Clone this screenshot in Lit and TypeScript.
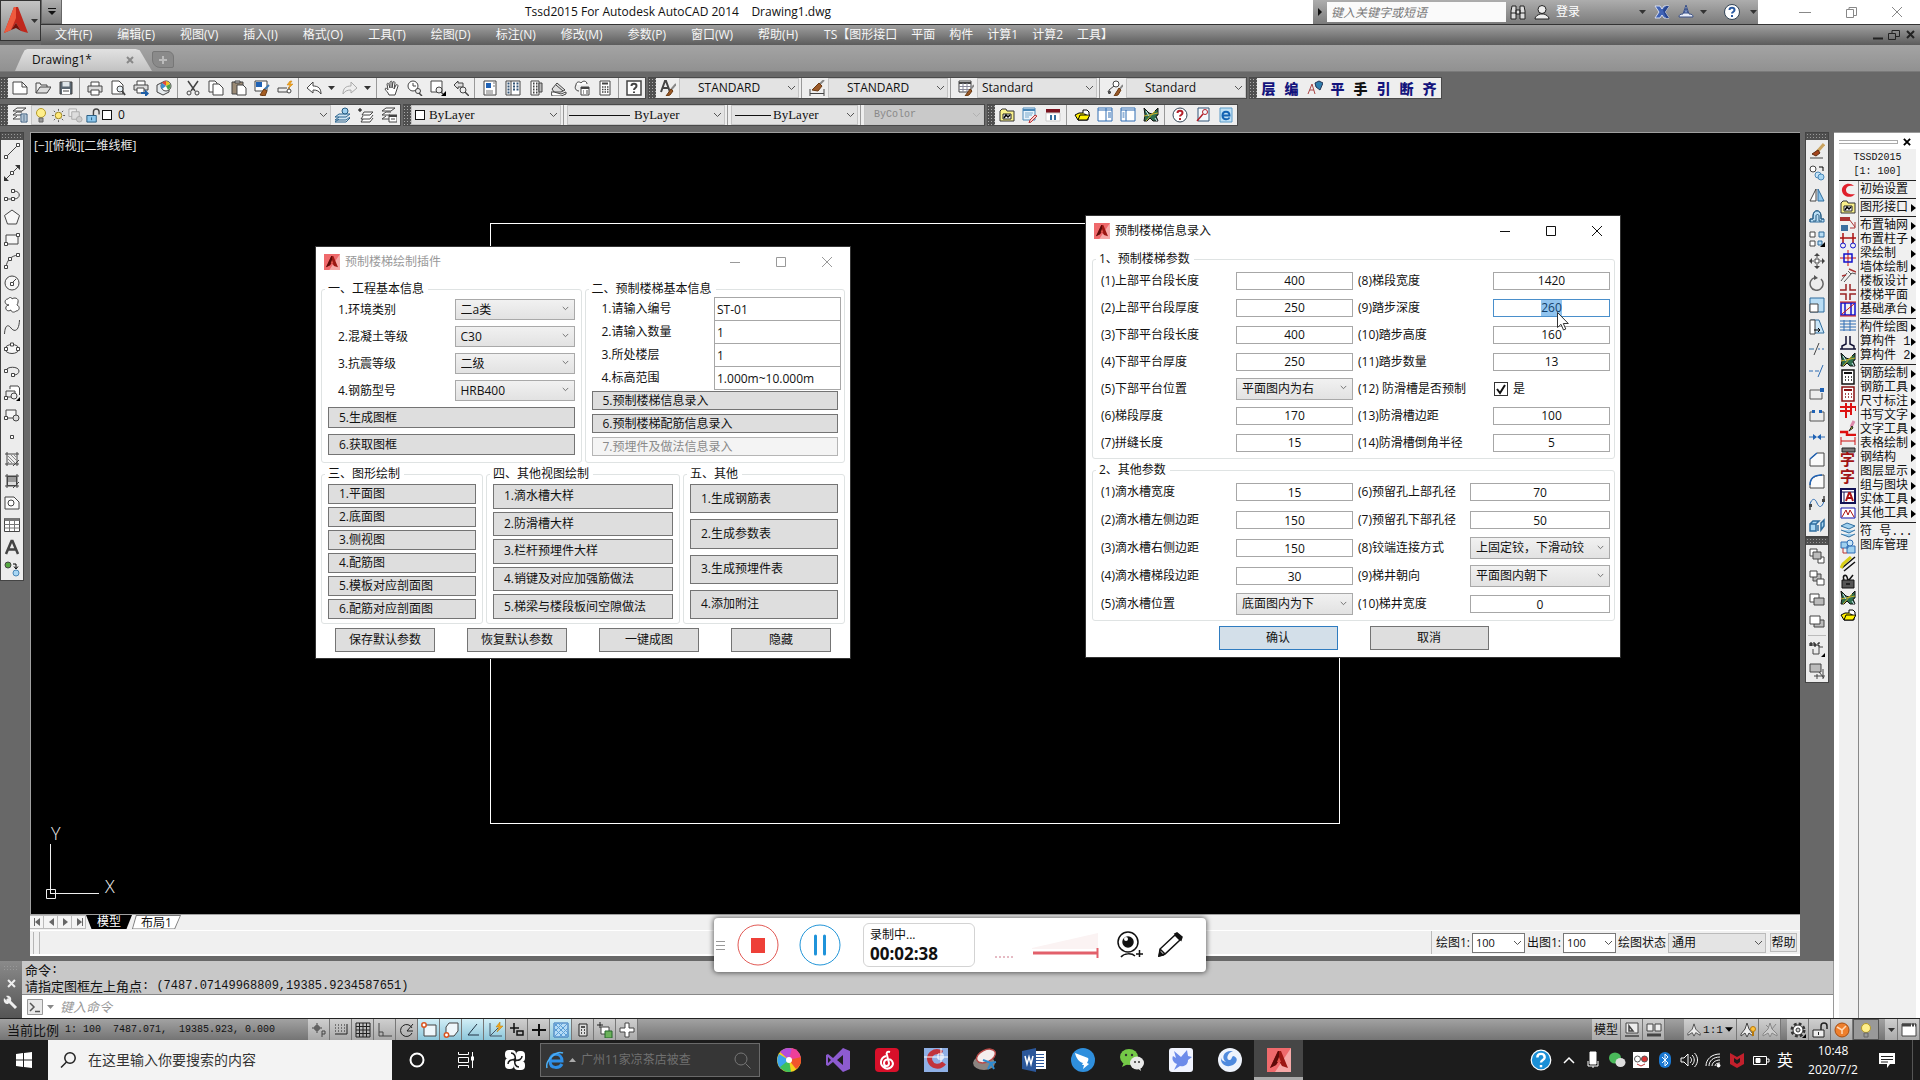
import { LitElement, html, svg, css, nothing, TemplateResult, SVGTemplateResult } from "lit";
import { customElement } from "lit/decorators.js";

/* ------------------------------------------------------------------ icons */

const ICONS: Record<string, SVGTemplateResult> = {
  // file toolbar
  new: svg`<path d="M1 2h9l5 5v7H1z" fill="#fff"/><path d="M10 2v5h5"/>`,
  open: svg`<path d="M1 13V3h4l1 2h6v2"/><path d="M1 13l4-6h11l-4 6z" fill="#ddd"/>`,
  save: svg`<path d="M2 2h12v12H2z" fill="#5a6772"/><path d="M4.500 2h7v4.500h-7z" fill="#dfe6ea" stroke="none"/><path d="M4 9h8v5H4z" fill="#fff" stroke="none"/><path d="M5 11h6"/>`,
  print: svg`<path d="M4 6V2h8v4" fill="#fff"/><path d="M1 6h14v6H1z" fill="#ddd"/><path d="M4 10h8v5H4z" fill="#fff"/>`,
  preview: svg`<path d="M2 1h7l4 4v9H2z" fill="#fff"/><circle cx="10" cy="9" r="3" fill="#e6f0f6"/><path d="M12 11l3 4" stroke-width="2"/>`,
  publish: svg`<path d="M4 5V1h8v4" fill="#fff"/><path d="M1 5h14v5H1z" fill="#ddd"/><path d="M4 8h7v5H4z" fill="#fff"/><path d="M8 12h4v-2.500l4 4-4 4V14H8z" fill="#1d5fa8" stroke="none"/>`,
  print3d: svg`<path d="M1 5l6-3 6 3v7l-6 3-6-3z" fill="#e4e9ec"/><circle cx="10" cy="6" r="5" fill="#fff"/><path d="M10 6L6 3a5 5 0 0 1 4-2z" fill="#e14b3c" stroke="none"/><path d="M10 6V1a5 5 0 0 1 4 3z" fill="#f3c11b" stroke="none"/><path d="M10 6l4-2a5 5 0 0 1-2 6z" fill="#4ba24a" stroke="none"/><path d="M10 6L6 9a5 5 0 0 1 0-6z" fill="#3d8ed0" stroke="none"/>`,
  cut: svg`<path d="M3 1l7 10M13 1L6 11" stroke-width="1.500"/><circle cx="4" cy="13" r="2"/><circle cx="12" cy="13" r="2"/>`,
  copy: svg`<path d="M1 1h6l2 2v9H1z" fill="#fff"/><path d="M5 4h6l4 4v7H5z" fill="#fff"/>`,
  paste: svg`<path d="M1 2h11v12H1z" fill="#9a8a75"/><path d="M4 1h5v2H4z" fill="#ccc"/><path d="M6 5h6l3 3v7H6z" fill="#fff"/>`,
  match: svg`<path d="M1 1h12v10H1z" fill="#fff"/><path d="M2 2h6v5H2z" fill="#1f62b5" stroke="none"/><path d="M15 5l-5 5" stroke="#3c7ab5" stroke-width="2"/><path d="M10 9l3 2-2 5-5-1z" fill="#a55d23" stroke="#6b3a12"/>`,
  block: svg`<path d="M1 12V8h9M1 12h11V7"/><circle cx="12" cy="11" r="2" fill="#fff"/><path d="M13 1l-3 4h3l-2 4 5-5h-3l2-3z" fill="#f2a81d" stroke="#c57b12" stroke-width=".5"/>`,
  undo: svg`<path d="M7 2L1 8l6 5v-3c4 0 6 1 8 4 0-6-3-8-8-8z" fill="#fff"/>`,
  redo: svg`<path d="M9 2l6 6-6 5v-3c-4 0-6 1-8 4 0-6 3-8 8-8z" stroke="#aaa" fill="#eee"/>`,
  pan: svg`<path d="M5 15c-1-3-3-4-4-6 1-2 2 0 3 1L3 4c1-2 2 0 2 1l1 3V2c1-1 2-1 2 0v6l1-6c1-1 2 0 2 1l-1 6 2-4c1-1 2 0 2 1l-3 9z" fill="#fff"/>`,
  zoomrt: svg`<circle cx="6" cy="6" r="5" fill="#fff"/><path d="M6 3v3h3"/><circle cx="11" cy="11" r="2.500" fill="#eee"/><path d="M12 13l3 3" stroke-width="1.500"/>`,
  zoomwin: svg`<path d="M1 1h11v11H1z" fill="#fff"/><circle cx="9" cy="10" r="3" fill="#eee"/><path d="M11 12l2 2" stroke-width="1.500"/><path d="M16 16h-5l5-5z" fill="#000" stroke="none"/>`,
  zoomprev: svg`<path d="M5 1L1 5l4 4V7h5V3H5z" fill="#ddd"/><circle cx="10" cy="10" r="3" fill="#eee"/><path d="M12 12l4 4" stroke-width="1.500"/>`,
  props: svg`<path d="M2 1h12v14H2z" fill="#fff"/><path d="M4 3h5v5H4z" fill="#1f62b5" stroke="none"/><path d="M4 11h7M4 13h7M11 3h2M11 6h2" stroke="#777"/>`,
  center: svg`<path d="M1 1h14v14H1z" fill="#fff"/><path d="M6 1v14"/><path d="M2.500 3.500h2M2.500 6.500h2M2.500 9.500h2M2.500 12.500h2M8 3.500h2M8 6.500h2M8 9.500h2M11.500 3.500h2M11.500 6.500h2M11.500 9.500h2" stroke="#357" stroke-width="2"/>`,
  palette: svg`<path d="M3 1h8v14H3z" fill="#fff"/><path d="M11 3h3v9h-3z" fill="#bbb"/><path d="M5 3.500h1.500M8 3.500h1.500M5 6.500h1.500M8 6.500h1.500M5 9.500h1.500M8 9.500h1.500M5 12.500h1.500M8 12.500h1.500" stroke-width="2"/>`,
  sheets: svg`<path d="M1 9l5-6 8 7-4 2H3z" fill="#ddd"/><path d="M0 12h3l7 2 5-2v2l-5 2H1z" fill="#fff"/><path d="M5 5l7 6"/>`,
  markup: svg`<path d="M2 5c0-3 3-4 5-2 2-3 6-2 6 1" fill="#fff"/><path d="M2 5c-2 3 0 6 3 6" /><path d="M7 7h8v8H7z" fill="#fff"/><path d="M7 8h8" stroke-width="2"/><path d="M9 11h1M12 11h2M9 13h1M12 13h2"/>`,
  calc: svg`<path d="M3 1h10v14H3z" fill="#fff"/><path d="M5 3.500h6" stroke-width="2"/><path d="M5 7h1.500M7.500 7H9M10 7h1.500M5 9.500h1.500M7.500 9.500H9M10 9.500h1.500M5 12h1.500M7.500 12H9M10 12h1.500" stroke-width="1.500"/>`,
  help: svg`<path d="M1 1h14v14H1z" fill="#fff" stroke-width="1.500"/><path d="M5.500 6c0-3 5-3 5 0 0 2-2.500 2-2.500 4M8 11.500v1.500" stroke-width="2"/>`,
  // style toolbar
  textstyle: svg`<path d="M1 12L5 1h1l4 11M3 8h5" stroke-width="2"/><path d="M16 4l-6 7" stroke="#888" stroke-width="2"/><path d="M11 9l2 2-3 4-4 1z" fill="#9c5a28" stroke="#6b3a12"/>`,
  dimstyle: svg`<path d="M1 9v7M15 9v7M1 13.500h14"/><path d="M15 0l-5 5" stroke="#888" stroke-width="2"/><path d="M10 3l3 3-4 5-6-1z" fill="#9c5a28" stroke="#6b3a12"/>`,
  tablestyle: svg`<path d="M1 1h12v11H1z" fill="#fff"/><path d="M1 3h12" stroke-width="2"/><path d="M1 6.500h12M1 9.500h12M5 3v9M9 3v9" stroke="#889"/><path d="M16 5l-4 5" stroke="#888" stroke-width="2"/><path d="M12 9l2 2-3 4-4 1z" fill="#9c5a28" stroke="#6b3a12"/>`,
  mleader: svg`<circle cx="9" cy="4" r="3" fill="#fff"/><path d="M7 6l-5 4 1 4M2 14l-1-3 3 1z"/><path d="M16 5l-4 5" stroke="#888" stroke-width="2"/><path d="M12 8l2 2-3 5-4 1z" fill="#9c5a28" stroke="#6b3a12"/>`,
  abrush: svg`<path d="M1 14L5 4l3 10M3 10h4" stroke="#a44"/><path d="M8 3l4-2 4 2-3 7-4-3z" fill="#2f7dad" stroke="#235"/>`,
  // layers
  layerprop: svg`<path d="M5 1h9l-4 3H1zM5 5h5M5 5L1 8h8M5 9L1 12h7" fill="#fff"/><path d="M9 7h6v8H9z" fill="#dbe9f3" stroke="#357"/><path d="M10.500 9h3M10.500 11h3M10.500 13h3" stroke="#357"/>`,
  bulb: svg`<circle cx="8" cy="6" r="4.500" fill="#ffef8a" stroke="#b59a28"/><path d="M6 11h4v4H6z" fill="#999" stroke="#666"/>`,
  sun: svg`<circle cx="8" cy="8" r="3.500" fill="#ffe97a" stroke="#9a8220"/><path d="M8 1v2M8 13v2M1 8h2M13 8h2M3 3l1.500 1.500M11.500 11.500L13 13M3 13l1.500-1.500M11.500 4.500L13 3" stroke="#555"/>`,
  freezevp: svg`<path d="M1 1h8v8H1z" fill="#eee" stroke="#aaa"/><path d="M4 4h8v8H4z" fill="#ddd" stroke="#aaa"/><circle cx="12" cy="12" r="3" fill="#ccc" stroke="#aaa"/>`,
  unlock: svg`<path d="M9 8V4c0-4 6-4 6 0v3" stroke-width="1.500"/><path d="M2 8h10v7H2z" fill="#8cc8ee" stroke="#24597e"/><path d="M7 10v3" stroke="#24597e"/>`,
  layercur: svg`<path d="M4 7h11l-4 3H0zM4 10l-4 3h11l4-3" fill="#cfe4f2" stroke="#2b658f"/><path d="M4 12l-4 3h11l4-4" stroke="#2b658f"/><circle cx="10" cy="4" r="3" fill="#9fd0ef" stroke="#24597e"/>`,
  layerprev: svg`<path d="M0 3h4M2 1v4" stroke="#000"/><path d="M6 5h9l-3 3H4zM5 9l-2 3h9l3-4M5 12l-2 3h9l3-4" fill="#fff"/>`,
  layerstate: svg`<path d="M5 1h9l-4 3H1zM5 5h5M5 5L1 8h8M5 9L1 12h7" fill="#fff"/><path d="M8 8h8v7H8z" fill="#fff"/><path d="M8 9h8" stroke-width="2"/><path d="M10 12h4"/>`,
  folder: svg`<path d="M1 14V4l2-2h4l1 2h7v10z" fill="#f8ef8a" stroke="#333"/><path d="M4 7h8v5H4z" fill="#fff" stroke="#222"/><path d="M5 11l2-3 2 2 2-2" stroke="#000" stroke-width="1.500"/>`,
  sheetpen: svg`<path d="M1 1h12v12H1z" fill="#e8f3fb" stroke="#4a88b8"/><path d="M1 3h12" stroke="#4a88b8" stroke-width="2"/><path d="M3 6h8M3 8h7M3 10h4" stroke="#79a9cc"/><path d="M15 9l-6 6-2 1 1-3 5-5z" fill="#f7d3d3" stroke="#b33"/>`,
  beam: svg`<path d="M1 2h14v4H1z" fill="#7c1420" stroke="none"/><path d="M1 6h14v8H1z" fill="#fff" stroke="#ccc"/><path d="M6 8v5M10 8v5" stroke="#346fa0" stroke-width="2"/>`,
  yfolder: svg`<path d="M1 8l4-2h6v2h3v5H4z" fill="#ffee00" stroke="#000"/><path d="M6 8h10l-3 5H4z" fill="#fff200" stroke="#000"/><path d="M9 6V3h4l2 2v3" fill="#fff" stroke="#000"/>`,
  panel1: svg`<path d="M1 1h14v13H1z" fill="#fff" stroke="#2f6db3"/><path d="M9 1v13M1 3h14" stroke="#2f6db3"/><path d="M11 6h3M11 8h3M11 10h3" stroke="#2f6db3"/>`,
  panel2: svg`<path d="M1 1h14v13H1z" fill="#fff" stroke="#2f6db3"/><path d="M6 3v11M1 3h14" stroke="#2f6db3"/><path d="M2.500 6h2M2.500 8h2M2.500 10h2" stroke="#2f6db3"/>`,
  bird: svg`<path d="M1 1l5 5 3 1 6-6v7l-2 1 2 5H10l-3-3-3 3H1l1-6z" fill="#2f6f4f" stroke="#111"/><path d="M1 9l14-3M3 14l9-10" stroke="#c9b52c"/><path d="M3 4l3 5M12 11l2 3" stroke="#cfe4f2"/>`,
  qred: svg`<circle cx="8" cy="8" r="7" fill="#fff" stroke="#345"/><path d="M5.500 6c0-3 5-3 5 0 0 2-2.500 2-2.500 3.500M8 11v2" stroke="#b3202a" stroke-width="2"/>`,
  keydoc: svg`<path d="M3 1h11v13H3z" fill="#f4f9fc" stroke="#357"/><circle cx="10" cy="5" r="2.500" stroke="#b3202a"/><path d="M8 7l-6 7" stroke="#b3202a" stroke-width="1.500"/>`,
  iedoc: svg`<path d="M2 1h12v14H2z" fill="#bfe0f5" stroke="#5a9bc8"/><path d="M4.500 8.500h7c0-5-7-5-7 0s6 4.500 7 2" stroke="#1463b3" stroke-width="2"/>`,
  // draw
  line: svg`<path d="M2 14L14 2"/><path d="M0.500 12.500h3v3h-3zM12.500 .5h3v3h-3z" fill="#fff"/>`,
  xline: svg`<path d="M2 14L14 2"/><path d="M0 16v-5l5 5zM16 0v5l-5-5z" fill="#333" stroke="none"/><path d="M6.500 6.500h3v3h-3z" fill="#fff"/>`,
  pline: svg`<path d="M2 12h8c7 0 7-8 0-8H8"/><path d="M.5 10.500h3v3h-3zM7.500 10.500h3v3h-3zM7.500 2.500h3v3h-3z" fill="#fff"/>`,
  polygon: svg`<path d="M8 1l7.500 5.500L12.500 15h-9L.5 6.500z" fill="#f6f6f6"/>`,
  rect: svg`<path d="M2 4h12v9H2z" fill="#f6f6f6"/><path d="M.5 11.500h3v3h-3zM12.500 2.500h3v3h-3z" fill="#fff"/>`,
  arc: svg`<path d="M2 14C3 7 7 3 14 2"/><path d="M.5 12.500h3v3h-3zM12.500 .5h3v3h-3zM4.500 4.500h3v3h-3z" fill="#fff"/>`,
  circle: svg`<circle cx="8" cy="8" r="7" fill="#f6f6f6"/><path d="M8 8l4-4"/><path d="M6.500 7.500h3v3h-3z" fill="#fff"/>`,
  cloud: svg`<path d="M5 8C0 8 0 2 4 2c1-2 4-2 4 0 2-2 7-1 6 3 0 2-1 2-1 3 3 1 3 6-1 6-2 2-5 1-5-1-3 2-6 0-5-3 0-1 2-2 3-2z" fill="#fff"/>`,
  spline: svg`<path d="M.5 15C1 6 4 5 7 9s8 4 8.500-8"/>`,
  ellipse: svg`<ellipse cx="8" cy="8" rx="7" ry="4.500" fill="#f6f6f6"/><path d="M.5 6.500h3v3h-3zM12.500 6.500h3v3h-3zM6.500 2h3v3h-3z" fill="#fff"/>`,
  ellarc: svg`<path d="M2 8c0-5 13-5 13 0 0 2-2 4-5 4"/><path d="M.5 6.500h3v3h-3zM7.500 10.500h3v3h-3z" fill="#fff"/>`,
  insert: svg`<path d="M6 4V1h8l1.500 2v7" fill="#fff"/><path d="M2 12V6h9v6z" fill="#eee"/><circle cx="10" cy="11" r="3" fill="#eee"/><path d="M16 16h-4l4-4z" fill="#000" stroke="none"/><path d="M.5 11.500h3v3h-3z" fill="#fff"/>`,
  makeblk: svg`<path d="M2 11V3h10v8z" fill="#f6f6f6"/><circle cx="12" cy="11" r="3" fill="#ddd"/><path d="M.5 9.500h3v3h-3z" fill="#fff"/>`,
  point: svg`<path d="M6.500 6.500h3v3h-3z" fill="#fff"/>`,
  hatch: svg`<path d="M3 1v14M13 1v14M1 3h14M1 13h14"/><path d="M4 5l7 7M4 8l4 4M7 4l5 5M4 11l1 1M10 4l2 2" stroke="#888"/><path d="M15 9l-6 6"/>`,
  gradient: svg`<path d="M3.500 3.500h9v9h-9z" fill="#999"/><path d="M4 9h8v3H4z" fill="#ddd" stroke="none"/><path d="M3 1v14M13 1v14M1 3h14M1 13h14M15 9l-6 6"/>`,
  region: svg`<path d="M1 2h9l5 5v7H1z" fill="#fafafa"/><circle cx="7" cy="8" r="3" fill="#fff"/>`,
  table: svg`<path d="M.5 1.500h15v13H.5z" fill="#fff"/><path d="M.5 2.500h15" stroke-width="3" stroke="#777"/><path d="M.5 7.500h15M.5 11h15M5.500 4v10M10.500 4v10" stroke="#777"/>`,
  mtext: svg`<path d="M2 15L7.500 2h1L14 15M4 10.500h8" stroke-width="2.500"/>`,
  addsel: svg`<circle cx="4" cy="4" r="3" fill="#57a843"/><circle cx="12" cy="12" r="3" fill="#a9d7f4" stroke="#4a88b8"/><path d="M9 3h3v4M10 5.500L12 8l2-2.500" stroke="#000"/>`,
  // modify
  erase: svg`<path d="M15 1L8 9" stroke="#caa35f" stroke-width="3"/><path d="M9 7l2 3-4 3-4-2z" fill="#a5441c" stroke="#5f2b10"/><path d="M1 15h13"/>`,
  copyobj: svg`<circle cx="4" cy="4" r="3" fill="#fff"/><circle cx="9" cy="10" r="3" fill="#c9e5f7" stroke="#4a88b8"/><circle cx="12" cy="12" r="3" fill="#a9d7f4" stroke="#4a88b8"/><path d="M10 2h4v4" stroke="#000"/>`,
  mirror: svg`<path d="M7 2v12H1z" fill="#fff"/><path d="M9 2v12h6z" fill="#8fc6ec" stroke="#2f6d9e"/>`,
  offset: svg`<path d="M1 13v-3h3V7c0-7 8-7 8 0v3h3v3z" fill="#b9ddf4" stroke="#2f6d9e"/><path d="M1 13v-3h3V7c0-7 8-7 8 0v3h3M4 12h3V7c0-2 3-2 3 0v5h3" stroke="#24597e"/>`,
  array: svg`<path d="M1 1h5v5H1zM1 10h5v5H1z" fill="#fff"/><path d="M10 1h5v5h-5zM9 10h4v4H9z" fill="#b9ddf4" stroke="#2f6d9e"/><path d="M16 16h-5l5-5z" fill="#000" stroke="none"/>`,
  move: svg`<path d="M8 0l3 3H5zM8 16l-3-3h6zM0 8l3-3v6zM16 8l-3 3V5z" fill="#444" stroke="none"/><path d="M8 2v3M8 11v3M2 8h3M11 8h3"/><path d="M6 6h4v4H6z" fill="#fff"/>`,
  rotate: svg`<path d="M6 2.500A6.500 6.500 0 1 0 12 4" stroke="#666" stroke-width="1.500"/><path d="M5 0l4 3-4 2z" fill="#555" stroke="none"/>`,
  scale: svg`<path d="M1 1h14v14H1z" fill="#b9ddf4" stroke="#2f6d9e"/><path d="M1 7h8v8H1z" fill="#fff"/>`,
  stretch: svg`<path d="M2 1h8l5 13H2z" fill="#c9e5f7" stroke="#2f6d9e"/><path d="M1 1h5v14H1z" fill="#fff"/><path d="M5 11h6M9 9l2 2-2 2" stroke="#000"/>`,
  trim: svg`<path d="M0 8h5" stroke="#2f6d9e"/><path d="M10 2L5 14"/><path d="M9 8h2M13 8h2" stroke="#2f6db3"/>`,
  extend: svg`<path d="M0 8h4M6 8h4" stroke="#2f6db3"/><path d="M14 2L9 14" stroke="#2f6db3"/>`,
  breakpt: svg`<path d="M1 14V5h12M13 8v6H1" stroke="#555"/><path d="M11 3h4v4h-4z" fill="#1f62b5" stroke="none"/>`,
  brk: svg`<path d="M3 5H1v9h14V5h-2" stroke="#555"/><path d="M3 3h3v3H3zM10 3h3v3h-3z" fill="#1f62b5" stroke="none"/>`,
  join: svg`<path d="M0 8h6M16 8h-6" stroke="#2f6db3"/><path d="M8 8L4 5v6zM8 8l4-3v6z" fill="#1f62b5" stroke="none"/>`,
  chamfer: svg`<path d="M1 15V8l7-6h7v13z" fill="#fafafa"/><path d="M1 8l7-6" stroke="#1f62b5" stroke-width="1.500"/>`,
  fillet: svg`<path d="M1 15v-3C1 5 6 2 15 2v13z" fill="#fafafa"/><path d="M1 12C1 5 6 2 13 2" stroke="#1f62b5" stroke-width="1.500"/>`,
  blend: svg`<path d="M1 15v-5M15 1v5" stroke="#444" stroke-width="1.500"/><path d="M1 9c2-6 5-6 7-1s5 5 7-2" stroke="#2f6db3"/><path d="M0 9h3v3H0zM13 4h3v3h-3z" fill="#444" stroke="none"/>`,
  explode: svg`<path d="M1 7h6v7H1zM1 7l3-3h6L7 7M12 6l3-3v6l-3 4zM9 8v6" fill="#a9d7f4" stroke="#2f6d9e" stroke-width="1.500"/>`,
  order1: svg`<path d="M1 1h7v7H1zM9 9h6v6H9z" fill="#fff"/><path d="M4 4h8v7H4z" fill="#bbb"/>`,
  order2: svg`<path d="M4 4h8v7H4z" fill="#bbb"/><path d="M1 1h7v6H1zM8 9h7v6H8z" fill="#fff"/>`,
  order3: svg`<path d="M1 2h9v8H1z" fill="#fff"/><path d="M5 6h10v7H5z" fill="#bbb"/>`,
  order4: svg`<path d="M5 6h10v7H5z" fill="#bbb"/><path d="M1 2h10v8H1z" fill="#fff"/>`,
  orderabc: svg`<path d="M1 5V2h2v3M1 4h2M5 1v4h2V3H5M11 2H9v3h2" stroke="#000"/><path d="M4 8v5h6V6h4"/><path d="M16 16h-4l4-4z" fill="#000" stroke="none"/>`,
  orderhatch: svg`<path d="M1 1h11v8H1z" fill="#bbb"/><path d="M5 13h11M14 6v10M8 11v5M10 9l5 6"/>`,
  // structural palette
  t0: svg`<path d="M14 4C9-1 1 3 2 9c1 6 9 8 13 3-4 1-9 0-9-4s4-5 8-4z" fill="#e0202c" stroke="none"/>`,
  t2: svg`<path d="M1 9h7v6H1z" fill="#3a6fa0" stroke="none"/><path d="M0 1h10v4H0z" fill="#a33" stroke="none"/><path d="M9 3l6 8M15 6v6h-5" stroke="#a33"/>`,
  t3: svg`<path d="M0 5h16M3 0v10M13 0v10" stroke="#a11" stroke-width="1.500"/><circle cx="3" cy="12.500" r="2.500" stroke="#11c"/><circle cx="13" cy="12.500" r="2.500" stroke="#11c"/>`,
  t4: svg`<path d="M8 0v16M0 8h16" stroke="#c11"/><path d="M4 4h8v8H4z" stroke="#11c" stroke-width="1.500"/>`,
  t5: svg`<path d="M1 14l6-8M4 15l8-9 4 1M8 4l3 3" stroke="#555"/><path d="M9 2l7 3M2 9l4-1" stroke="#a33" stroke-width="1.500"/>`,
  t6: svg`<path d="M6 0v6H0M10 0v6h6M6 16v-6H0M10 16v-6h6" stroke="#922" stroke-width="1.500"/>`,
  t7: svg`<path d="M1 2h14v12H1zM5 2v12M11 2v12" stroke="#11c" stroke-width="1.500"/><path d="M0 1h16M0 15h16M2 13L14 3" stroke="#c11"/>`,
  t8: svg`<path d="M0 3h16M0 6h16M0 9h16M0 12h16" stroke="#2f6db3"/><path d="M4 2v11M10 2v11" stroke="#2f6db3"/>`,
  t9: svg`<path d="M6 1v8l-4 2v3h12v-3l-4-2V1M0 14h16" stroke="#113" stroke-width="1.500"/>`,
  t11: svg`<path d="M2 1h12v14H2z" fill="#fff" stroke="#111" stroke-width="1.500"/><path d="M4 4h8" stroke="#111" stroke-width="2"/><path d="M5 8h1M8 8h1M11 8h1M5 11h1M8 11h1M11 11h1" stroke="#111" stroke-width="1.500"/>`,
  t12: svg`<path d="M2 1h12v14H2z" fill="#fff" stroke="#811" stroke-width="1.500"/><path d="M4 4h8" stroke="#811" stroke-width="2"/><path d="M5 8h1M8 8h1M11 8h1M5 11h1M8 11h1M11 11h1" stroke="#811" stroke-width="1.500"/>`,
  t13: svg`<path d="M0 4h16v4M0 8h12M6 0v15M11 0v12" stroke="#d11" stroke-width="2"/>`,
  t14: svg`<path d="M0 12h7v3h9" stroke="#d11" stroke-width="2.500"/><path d="M14 1l-3 6" stroke="#d8a" stroke-width="3"/><path d="M12 6l-3 5 4-3z" fill="#dd2" stroke="#222"/>`,
  t15: svg`<path d="M1 0v8M15 0v8M1 4h14" stroke="#c11"/><path d="M2 11h13v4H2z" fill="#777" stroke="#222"/>`,
  t18: svg`<path d="M1 1h14v14H1z" fill="#fff" stroke="#115" stroke-width="2"/><path d="M1 4h14M4 4v11" stroke="#115"/><path d="M6 13l3-8h1l3 8M7 10h5" stroke="#a11" stroke-width="2"/>`,
  t19: svg`<path d="M1 3h14v10H1z" fill="#fff" stroke="#11a"/><path d="M2 12l4-7 2 5 2-5 4 7" stroke="#a11"/>`,
  t20: svg`<path d="M1 4l6-3 8 3-6 3zM1 8l8 3 6-3M1 12l8 3 6-3" fill="#9fd0ef" stroke="#2f6d9e"/>`,
  t21: svg`<path d="M1 3h7v6H1zM7 7h8v7H7z" fill="#9fd0ef" stroke="#2f6db3"/><circle cx="10" cy="4" r="3" fill="#c9e5f7" stroke="#2f6db3"/><path d="M3 9v5h4" stroke="#b33"/>`,
  t22: svg`<path d="M15 1L2 12M15 6L4 15" stroke="#111" stroke-width="1.500"/><path d="M11 1L3 8l-2 4" stroke="#d9cf17" stroke-width="3"/>`,
  t23: svg`<path d="M2 7h12v8H2z" fill="#555" stroke="#111"/><path d="M4 7c-2-5 2-6 3-3l1 3M9 7l4-5M6 11h4" stroke="#111" stroke-width="1.500"/>`,
  // generic
  xclose: svg`<path d="M3 3l10 10M13 3L3 13" stroke-width="3"/>`,
  wrench: svg`<path d="M4 4l9 9" stroke="#eee" stroke-width="3"/><path d="M1 3l3 3 2-2-3-3c4-1 6 2 5 5L5 9C2 9 0 7 1 3z" fill="#eee" stroke="none"/>`,
  prompt: svg`<path d="M.5 .5h15v15H.5z" fill="#e8e8e8" stroke="#999"/><path d="M3 4l4 4-4 4M8 12.500h5" stroke="#555" stroke-width="1.500"/>`,
  binoc: svg`<path d="M1 15V7l1-5h4v13zM15 15V7l-1-5h-4v13zM6 6h4v4H6z" fill="#ddd" stroke="#222"/><path d="M1 9h5M10 9h5" stroke="#222"/>`,
  person: svg`<circle cx="8" cy="5.500" r="4" fill="#eee" stroke="#222"/><path d="M1 15c0-3 3-4 5-5h4c2 1 5 2 5 5z" fill="#eee" stroke="#222"/>`,
  exch: svg`<path d="M1 2h5l2 3 2-3h5l-4 6 4 6h-5l-2-3-2 3H1l4-6z" fill="#3f62b5" stroke="#d5dcf0"/><path d="M9 6l3-4h3l-4 6 4 6h-3z" fill="#27458f" stroke="none"/>`,
  a360: svg`<path d="M8 1l3 9c3 0 4 1 4 3H1c0-2 1-3 4-3z" fill="#e8ecf6" stroke="#3a5188"/><path d="M6 9l2-5 2 5z" fill="#7d94c8" stroke="#3a5188"/>`,
  qblue: svg`<circle cx="8" cy="8" r="7.500" fill="#fff" stroke="#345"/><path d="M5.500 6c0-3 5-3 5 0 0 2-2.500 2-2.500 3.500M8 11v2" stroke="#2b5aa0" stroke-width="2"/>`,
  // status bar
  s0: svg`<path d="M6 1v10M1 6h10M4 4h4v4H4z"/><path d="M11 15V9h3v3h-3"/>`,
  s1: svg`<path d="M2 3h1M5 3h1M8 3h1M2 6h1M5 6h1M8 6h1M2 9h1M5 9h1M8 9h1M11 3h1M11 6h1M11 9h1M2 12h12M14 2v10" stroke="#222"/>`,
  s2: svg`<path d="M1 1h14v14H1zM4.500 1v14M8 1v14M11.500 1v14M1 4.500h14M1 8h14M1 11.500h14" stroke="#222"/>`,
  s3: svg`<path d="M2 1v13h13M2 10h4v4"/>`,
  s4: svg`<path d="M13 6a6 6 0 1 0 0 5M8 9l6-7M8 9h6" stroke="#222"/>`,
  s5: svg`<path d="M3 3h12v11H3z" fill="#eef7fb"/><circle cx="3" cy="3" r="2.200" fill="#fff" stroke="#d9531e" stroke-width="1.500"/>`,
  s6: svg`<path d="M3 5l3-4h9v8l-4 5H3z" fill="#eef7fb"/><circle cx="3.500" cy="13" r="2.200" fill="#fff" stroke="#d9531e" stroke-width="1.500"/>`,
  s7: svg`<path d="M12 2L3 13h11" stroke="#234"/>`,
  s8: svg`<path d="M3 1v13h12M3 14l8-8" stroke="#456"/><path d="M13 0l-4 5h3l-2 5 6-6h-3z" fill="#f2a81d" stroke="#b7780a" stroke-width=".5"/>`,
  s9: svg`<path d="M1 6h9M5 1v10M8 9h6v4H8z" stroke="#111" stroke-width="1.500"/>`,
  s10: svg`<path d="M1 8h14M8 2v12" stroke="#111" stroke-width="2"/>`,
  s11: svg`<path d="M1 1h14v14H1z" fill="#b6dcf6" stroke="#2f6db3"/><path d="M1 5l4-4M1 10l9-9M1 15L15 1M6 15l9-9M11 15l4-4M5 1l10 10M1 1l14 14M1 6l9 9" stroke="#5b9fd6"/>`,
  s12: svg`<path d="M4 2h8v12H4z" fill="#ddd" stroke="#222"/><path d="M6 5h4M6 8h1M9 8h1M6 11h1M9 11h1" stroke="#222" stroke-width="1.500"/>`,
  s13: svg`<path d="M3 0v6M0 3h6" stroke="#222"/><path d="M4 5h8v7H4z" fill="#fff"/><path d="M8 9h7v7H8z" fill="#6bb25a" stroke="#27642a"/>`,
  s14: svg`<path d="M6 1h4v5h5v4h-5v5H6v-5H1V6h5z" fill="#fff" stroke="#444"/>`,
  sm1: svg`<path d="M2 1h12v10H2z" fill="#eee"/><path d="M5 9V4l4 5zM1 14h14" stroke-width="1.500"/>`,
  sm2: svg`<path d="M1 2h6v7H1zM9 2h6v7H9z" fill="#eee"/><path d="M1 13h14" stroke-width="3"/>`,
  anno: svg`<path d="M8 1l2 6 5 5v2l-5-3-2 4-2-4-5 3v-2l5-5z" fill="#eee"/>`,
  annob: svg`<path d="M7 1l2 6 4 5v2l-4-3-2 4-2-4-4 3v-2l4-5z" fill="#eee"/><circle cx="13" cy="7" r="2.500" fill="#ffc23a" stroke="#b7780a"/><path d="M13 10v4" stroke="#b7780a" stroke-width="2"/>`,
  annox: svg`<path d="M8 1l2 6 5 5v2l-5-3-2 4-2-4-5 3v-2l5-5z" fill="#ccc" stroke="#888"/><path d="M4 3l3 3M14 2l-4 5" stroke="#888"/>`,
  gear: svg`<circle cx="8" cy="8" r="6" stroke="#333" stroke-width="3" stroke-dasharray="2.700 2"/><circle cx="8" cy="8" r="5" fill="#fff" stroke="#333"/><circle cx="8" cy="8" r="2" fill="#ccc" stroke="#333"/><path d="M16 16h-4l4-4z" fill="#000" stroke="none"/>`,
  slock: svg`<path d="M9 8V4c0-4 6-4 6 0v3" stroke="#222" stroke-width="1.500"/><path d="M1 8h11v7H1z" fill="#eee" stroke="#222"/><path d="M6.500 10v3" stroke="#222"/>`,
  orange: svg`<circle cx="8" cy="8" r="7" fill="#ee7f2d" stroke="#a84e10"/><path d="M3 5l5 3 4-4M8 8v4" stroke="#ffd9b5" stroke-width="1.500"/>`,
  screen: svg`<path d="M1 2h14v12H1z" fill="#fff"/><path d="M1 3h14" stroke-width="3" stroke-dasharray="9 1 2 1"/>`,
};

function icon(name: string, size = 16) {
  return html`<svg class="icon" width=${size} height=${size} viewBox="0 0 16 16" aria-hidden="true">${ICONS[name] ?? nothing}</svg>`;
}

const chevron = html`<svg class="chev" width="9" height="6" viewBox="0 0 9 6" aria-hidden="true"><path d="M1 1l3.500 3.500L8 1" /></svg>`;
const triangle = html`<svg class="tri" width="7" height="4" viewBox="0 0 7 4" aria-hidden="true"><path d="M0 0h7L3.500 4z" /></svg>`;

function autocadLogo(size: number) {
  return html`<svg width=${size} height=${size} viewBox="0 0 24 24" aria-hidden="true">
    <rect width="24" height="24" fill="#ef6a6c" /><path d="M24 0v24H8z" fill="#f9c4c2" opacity=".7" />
    <path d="M11 3h3l7 17-6-2-3-5-3 4-6 3z" fill="#9c1713" /><path d="M11 3h1v8l-3 6-6 3z" fill="#5c0b09" /><path d="M12 9l2 5h-4z" fill="#e0564c" />
  </svg>`;
}

interface ComboOptions {
  cls?: string;
  lead?: TemplateResult | TemplateResult[];
  disabled?: boolean;
  id?: string;
}

function combo(label: string, value: string, o: ComboOptions = {}) {
  return html`<span class="combo ${o.cls ?? ""}">
    <select id=${o.id ?? nothing} aria-label=${label} ?disabled=${o.disabled}><option>${value}</option></select>
    ${o.lead ? html`<span class="lead">${o.lead}</span>` : nothing}${chevron}
  </span>`;
}

const shared = css`
  * { box-sizing: border-box; }
  button, input, select { font: inherit; color: inherit; margin: 0; padding: 0; border: 0; border-radius: 0; background: none; outline: none; }
  button { display: inline-flex; align-items: center; justify-content: center; }
  svg { display: block; flex: none; }
  .icon { stroke: #444; fill: none; stroke-width: 1; }
  .chev { stroke: #555; fill: none; stroke-width: 1; }
  .tri { fill: #333; }
  .combo { display: inline-grid; align-items: center; }
  .combo > * { grid-area: 1 / 1; }
  .combo select { appearance: none; width: 100%; height: 100%; text-overflow: clip; }
  .combo .chev { justify-self: end; margin-right: 3px; pointer-events: none; }
  .lead { display: flex; align-items: center; pointer-events: none; }
`;

const dialogStyles = css`
  :host { display: block; position: absolute; width: 534px; background: #fff; box-shadow: 0 0 0 1px #333; color: #111;
    font: 12px/16px "Open Sans", "Noto Sans CJK SC", sans-serif; }
  .title { display: flex; align-items: center; height: 30px; padding-left: 8px; }
  .title h2 { flex: 1; margin: 0 0 0 5px; font-size: 12px; font-weight: 400; }
  .title button { width: 46px; height: 29px; }
  .win { stroke: currentColor; fill: none; stroke-width: 1; }
  fieldset { margin: 0; padding: 0; min-width: 0; border: 1px solid #dfe3e3; border-radius: 3px; }
  legend { height: 16px; margin-left: 3px; padding: 0 4px 0 3px; }
  .btn { border: 1px solid #747474; background: #dedede; white-space: nowrap; }
  .btn:disabled { background: #f4f4f4; border-color: #b5b5b5; color: #8a8a8a; }
  input.box { width: 100%; border: 1px solid #a7a7a7; background: #fff; }
  .combo select { border: 1px solid #a9a9a9; background: linear-gradient(#f1f1f1, #e2e2e2); padding-left: 5px; }
  .combo .chev { width: 7px; height: 5px; margin-right: 6px; margin-bottom: 2px; }
`;

const windowButtons = html`
  <button aria-label="最小化"><svg class="win" width="12" height="12"><path d="M1 6.500h10" /></svg></button>
  <button aria-label="最大化"><svg class="win" width="12" height="12"><path d="M1.500 1.500h9v9h-9z" /></svg></button>
  <button aria-label="关闭"><svg class="win" width="12" height="12"><path d="M1 1l10 10M11 1L1 11" /></svg></button>
`;

/* ------------------------------------------------- stair drawing plug-in */

@customElement("stair-plugin-dialog")
export class StairPluginDialog extends LitElement {
  static styles = [shared, dialogStyles, css`
    .title { color: #999; }
    .body { padding: 4px 5px 6px; }
    .top { display: grid; grid-template-columns: 1fr 1fr; gap: 3px; margin-bottom: 3px; }
    .bottom { display: grid; grid-template-columns: 162px 1fr 162px; gap: 3px; }
    .stack { display: flex; flex-direction: column; }
    .btn { justify-content: flex-start; padding-left: 10px; width: 100%; }
    .project { gap: 6px; padding: 2px 6px 6px; }
    .field { display: grid; grid-template-columns: 1fr 120px; align-items: center; height: 21px; padding-left: 10px; }
    .field .combo { height: 21px; }
    .project .btn { height: 21px; }
    .stair { padding: 0 6px 6px; }
    .entry { display: grid; grid-template-columns: 1fr 127px; align-items: center; height: 23px; padding-left: 10px; margin-right: -3px; }
    .entry input { height: 24px; padding-left: 2px; }
    .stair .actions { gap: 4px; padding-top: 2px; }
    .stair .btn { height: 19px; }
    .col { height: 141px; padding: 2px 6px 4px; }
    .col .btn { flex: 1; }
    .g3 { gap: 3px; }
    .g6 { gap: 6px; }
    .footer { display: grid; grid-template-columns: repeat(4, 100px); gap: 32px; justify-content: center; padding-top: 4px; }
    .footer .btn { height: 24px; justify-content: center; padding: 0; }
  `];

  private selects = [["1.环境类别", "二a类"], ["2.混凝土等级", "C30"], ["3.抗震等级", "二级"], ["4.钢筋型号", "HRB400"]];
  private entries = [["1.请输入编号", "ST-01"], ["2.请输入数量", "1"], ["3.所处楼层", "1"], ["4.标高范围", "1.000m~10.000m"]];

  private column(title: string, cls: string, items: string[]) {
    return html`<fieldset><legend>${title}</legend>
      <div class="stack col ${cls}">${items.map((t) => html`<button class="btn">${t}</button>`)}</div>
    </fieldset>`;
  }

  render() {
    return html`
      <div class="title">${autocadLogo(16)}<h2>预制楼梯绘制插件</h2>${windowButtons}</div>
      <div class="body">
        <div class="top">
          <fieldset><legend>一、工程基本信息</legend>
            <div class="stack project">
              ${this.selects.map(([l, v], i) => html`<div class="field"><label for="s${i}">${l}</label>${combo(l, v, { id: `s${i}` })}</div>`)}
              <button class="btn">5.生成图框</button><button class="btn">6.获取图框</button>
            </div>
          </fieldset>
          <fieldset><legend>二、预制楼梯基本信息</legend>
            <div class="stair">
              ${this.entries.map(([l, v], i) => html`<div class="entry"><label for="e${i}">${l}</label><input class="box" id="e${i}" .value=${v} /></div>`)}
              <div class="stack actions">
                <button class="btn">5.预制楼梯信息录入</button>
                <button class="btn">6.预制楼梯配筋信息录入</button>
                <button class="btn" disabled>7.预埋件及做法信息录入</button>
              </div>
            </div>
          </fieldset>
        </div>
        <div class="bottom">
          ${this.column("三、图形绘制", "g3", ["1.平面图", "2.底面图", "3.侧视图", "4.配筋图", "5.模板对应剖面图", "6.配筋对应剖面图"])}
          ${this.column("四、其他视图绘制", "g3", ["1.滴水槽大样", "2.防滑槽大样", "3.栏杆预埋件大样", "4.销键及对应加强筋做法", "5.梯梁与楼段板间空隙做法"])}
          ${this.column("五、其他", "g6", ["1.生成钢筋表", "2.生成参数表", "3.生成预埋件表", "4.添加附注"])}
        </div>
        <div class="footer">${["保存默认参数", "恢复默认参数", "一键成图", "隐藏"].map((t) => html`<button class="btn">${t}</button>`)}</div>
      </div>`;
  }
}

/* --------------------------------------------------- stair data entry */

type Kind = "input" | "select" | "check";
type Cell = [string, string, Kind?];

@customElement("stair-info-dialog")
export class StairInfoDialog extends LitElement {
  static styles = [shared, dialogStyles, css`
    .body { padding: 5px 5px 7px 6px; }
    fieldset + fieldset { margin-top: 3px; }
    .grid { display: grid; align-items: center; padding: 0 4px 2px 8px; white-space: nowrap; }
    .a { grid-template-columns: 135px 117px 5px 1fr 117px; grid-auto-rows: 27px; }
    .b { grid-template-columns: 135px 117px 5px 1fr 140px; grid-auto-rows: 28px; }
    .left { grid-column: 1; }
    .right { grid-column: 4; }
    input.box { height: 18px; text-align: center; }
    input.box:focus { border-color: #4a8fcb; }
    input.box::selection { background: #90c3ee; color: #123f6b; }
    .combo { height: 22px; width: 100%; }
    .check { display: flex; align-items: center; gap: 5px; padding-left: 1px; }
    .check input { appearance: none; width: 14px; height: 14px; border: 1px solid #333; background: #fff; }
    .tick { display: grid; }
    .tick > * { grid-area: 1 / 1; }
    .tick svg { pointer-events: none; stroke: #111; fill: none; stroke-width: 2; }
    .footer { display: flex; justify-content: center; gap: 32px; padding-top: 5px; }
    .footer .btn { width: 119px; height: 24px; }
    .footer .primary { border-color: #2f7cc0; background: #d3dfe9; }
    .cursor { position: absolute; left: 471px; top: 96px; }
  `];

  private main: [Cell, Cell][] = [
    [["(1)上部平台段长度", "400"], ["(8)梯段宽度", "1420"]],
    [["(2)上部平台段厚度", "250"], ["(9)踏步深度", "260"]],
    [["(3)下部平台段长度", "400"], ["(10)踏步高度", "160"]],
    [["(4)下部平台厚度", "250"], ["(11)踏步数量", "13"]],
    [["(5)下部平台位置", "平面图内为右", "select"], ["(12) 防滑槽是否预制", "是", "check"]],
    [["(6)梯段厚度", "170"], ["(13)防滑槽边距", "100"]],
    [["(7)拼缝长度", "15"], ["(14)防滑槽倒角半径", "5"]],
  ];

  private other: [Cell, Cell][] = [
    [["(1)滴水槽宽度", "15"], ["(6)预留孔上部孔径", "70"]],
    [["(2)滴水槽左侧边距", "150"], ["(7)预留孔下部孔径", "50"]],
    [["(3)滴水槽右侧边距", "150"], ["(8)铰端连接方式", "上固定铰，下滑动铰", "select"]],
    [["(4)滴水槽梯段边距", "30"], ["(9)梯井朝向", "平面图内朝下", "select"]],
    [["(5)滴水槽位置", "底面图内为下", "select"], ["(10)梯井宽度", "0"]],
  ];

  firstUpdated() {
    const depth = this.renderRoot.querySelector<HTMLInputElement>("#a1r");
    depth?.focus({ preventScroll: true });
    depth?.select();
  }

  private cell([label, value, kind = "input"]: Cell, id: string, side: string) {
    const control =
      kind === "select" ? combo(label, value, { id })
      : kind === "check" ? html`<div class="check"><span class="tick"><input type="checkbox" id=${id} checked /><svg width="14" height="14"><path d="M3 7l3 4 5-8" /></svg></span><label for=${id}>${value}</label></div>`
      : html`<input class="box" id=${id} .value=${value} />`;
    return html`<label class=${side} for=${id}>${label}</label>${control}`;
  }

  private group(title: string, key: string, rows: [Cell, Cell][]) {
    return html`<fieldset><legend>${title}</legend><div class="grid ${key}">
      ${rows.map(([l, r], i) => html`${this.cell(l, `${key}${i}l`, "left")}${this.cell(r, `${key}${i}r`, "right")}`)}
    </div></fieldset>`;
  }

  render() {
    return html`
      <div class="title">${autocadLogo(16)}<h2>预制楼梯信息录入</h2>${windowButtons}</div>
      <div class="body">
        ${this.group("1、预制楼梯参数", "a", this.main)}
        ${this.group("2、其他参数", "b", this.other)}
        <div class="footer"><button class="btn primary">确认</button><button class="btn">取消</button></div>
      </div>
      <svg class="cursor" width="12" height="19" viewBox="0 0 12 19" aria-hidden="true"><path d="M.5 .5v15l3.500-3.200 2.500 5.700 2.300-1-2.500-5.500h5z" fill="#fff" stroke="#333" /></svg>`;
  }
}

/* -------------------------------------------------------- screen recorder */

@customElement("screen-recorder")
export class ScreenRecorder extends LitElement {
  static styles = [shared, css`
    :host { position: absolute; display: flex; align-items: center; width: 492px; height: 54px; padding-left: 2px; background: #fff; border-radius: 4px;
      box-shadow: 0 0 5px 1px rgba(0,0,0,.55); color: #111; font: 12px/16px "Open Sans", "Noto Sans CJK SC", sans-serif; }
    .grip { margin-right: 12px; }
    .round + .round { margin-left: 20px; }
    .time { display: flex; flex-direction: column; justify-content: center; width: 112px; height: 44px; margin-left: 22px; padding-left: 6px; border: 1px solid #d3d3d3; border-radius: 6px; line-height: 18px; }
    .time strong { font-size: 17px; line-height: 20px; }
    .level { margin-left: 20px; }
    .volume { margin-left: 17px; }
    .cam { margin-left: 17px; }
    .pen { margin-left: 14px; }
  `];

  render() {
    return html`
      <svg class="grip" width="9" height="9"><path d="M0 .5h9M0 4.500h9M0 8.500h9" stroke="#999" /></svg>
      <button class="round" aria-label="停止"><svg width="42" height="42"><circle cx="21" cy="21" r="20" fill="none" stroke="#e25a55" /><path d="M14 14h14v15H14z" fill="#ee4038" /></svg></button>
      <button class="round" aria-label="暂停"><svg width="42" height="42"><circle cx="21" cy="21" r="20" fill="none" stroke="#2295d8" /><path d="M16.500 12v18M25.500 12v18" stroke="#1f93da" stroke-width="3" stroke-linecap="round" /></svg></button>
      <div class="time"><span>录制中...</span><strong>00:02:38</strong></div>
      <svg class="level" width="20" height="26"><path d="M0 25h20" stroke="#c78" stroke-dasharray="2 2" /></svg>
      <svg class="volume" width="68" height="26"><path d="M0 16L66 1v16H0z" fill="#fbf3f3" /><path d="M1 21h64" stroke="#e2606b" stroke-width="3" /><path d="M65.500 16v10" stroke="#e2606b" stroke-width="2" /></svg>
      <button class="cam" aria-label="摄像头"><svg width="26" height="28" fill="none" stroke="#111" stroke-width="1.500"><circle cx="11" cy="11" r="10" /><circle cx="11" cy="11" r="5" fill="#111" /><circle cx="9" cy="8" r="2" fill="#fff" stroke="none" /><path d="M4 26c3-4 11-4 14-1M19 23h7M22.500 19v7" /></svg></button>
      <button class="pen" aria-label="画笔"><svg width="26" height="26" fill="none" stroke="#111" stroke-width="1.500"><path d="M2 24l1-7L18 3l5 5L8 22zM3 17l5 5" /><path d="M18 2l2-1 5 4-1 3z" fill="#111" /><path d="M2 24l1-4 3 3z" fill="#111" /></svg></button>`;
  }
}

/* --------------------------------------------------------------- taskbar */

const APPS: [string, SVGTemplateResult][] = [
  ["浏览器", svg`<circle cx="12" cy="12" r="12" fill="#f4d21d"/><path d="M12 12L3 4a12 12 0 0 1 13-3z" fill="#b44ddb"/><path d="M12 12L15 0a12 12 0 0 1 9 10z" fill="#ee3f9a"/><path d="M12 12l12-3a12 12 0 0 1-5 12z" fill="#f2552c"/><path d="M12 12L4 21A12 12 0 0 1 2 6z" fill="#3aa5ee"/><path d="M12 12l2 12a12 12 0 0 1-11-5z" fill="#3fc15b"/><circle cx="12" cy="12" r="3" fill="#fff"/>`],
  ["Visual Studio", svg`<path d="M17 0l7 3v18l-7 3L7 14l-5 4-2-1V7l2-1 5 4z" fill="#8d5bd0"/><path d="M17 7v10l-6-5zM2 9l3 3-3 3z" fill="#1f1f1f"/>`],
  ["音乐", svg`<rect width="24" height="24" rx="4" fill="#d8102a"/><path d="M15 4c-3-1-4 1-3 3l2 8c0 4-5 4-5 0s6-5 8-2c3 5-3 9-7 7-6-3-5-10 1-12" fill="none" stroke="#fff" stroke-width="2"/>`],
  ["绘图", svg`<rect width="24" height="24" fill="#8fb0e6"/><path d="M18 5C10 1 4 7 6 13s10 7 14 2" fill="none" stroke="#c2343c" stroke-width="5"/><path d="M0 9h24M14 6h5v5h-5zM17 0v14" stroke="#fff" fill="none"/>`],
  ["截图", svg`<ellipse cx="11" cy="15" rx="11" ry="7" fill="#8b8480"/><ellipse cx="13" cy="8" rx="10" ry="6" fill="#f4eeee" stroke="#b94a48" stroke-width="1.500" transform="rotate(-25 13 8)"/><path d="M10 12l8 3 5-1M18 15l-3 6M18 15l3 6" stroke="#2e8bd0" stroke-width="2" fill="none"/>`],
  ["Word", svg`<rect x="10" y="3" width="14" height="18" fill="#fff"/><path d="M12 6.500h10M12 9.500h10M12 12.500h10M12 15.500h10M12 18.500h10" stroke="#2b579a"/><path d="M0 3l14-3v24L0 21z" fill="#2b579a"/><path d="M3 8l2 8 2-7 2 7 2-8" fill="none" stroke="#fff" stroke-width="1.500"/>`],
  ["钉钉", svg`<circle cx="12" cy="12" r="12" fill="#2f8fdd"/><path d="M4 5l13 5c1 1 0 3-1 5l2 1-6 5 1-4h-2l1-2C8 14 5 10 4 5z" fill="#fff"/>`],
  ["微信", svg`<ellipse cx="9" cy="9" rx="9" ry="8" fill="#74c947"/><path d="M2 19l2-5 4 2z" fill="#74c947"/><ellipse cx="17" cy="15" rx="7" ry="6.500" fill="#e9e9e9"/><path d="M21 23l-1-4h-4z" fill="#e9e9e9"/><g fill="#333"><circle cx="6" cy="7" r="1.200"/><circle cx="12" cy="7" r="1.200"/><circle cx="15" cy="14" r="1"/><circle cx="19" cy="14" r="1"/></g>`],
  ["飞鸟", svg`<rect width="24" height="24" rx="3" fill="#f1f4ff"/><path d="M5 3l7 6 6-7 1 6 4 1-4 3c0 5-4 7-8 6l-6 4 3-6C3 14 3 10 4 8l3 2z" fill="#6c8bea"/>`],
  ["播放器", svg`<circle cx="12" cy="12" r="12" fill="#eef3fc"/><path d="M15 3C5 2 3 10 8 14c-4-1-5-3-5-5-1 8 6 11 12 8 5-3 5-8 0-9-2 2-1 4-4 4-3-1-2-7 4-9z" fill="#4f8ade"/>`],
];

@customElement("desktop-taskbar")
export class DesktopTaskbar extends LitElement {
  static styles = [shared, css`
    :host { display: flex; align-items: stretch; height: 40px; background: #1c1c1c; color: #fff; font: 12px/18px "Open Sans", "Noto Sans CJK SC", sans-serif; }
    .start { width: 48px; }
    .search { display: flex; align-items: center; width: 344px; padding-left: 12px; gap: 12px; background: #f3f3f3; color: #333; }
    .search input { flex: 1; min-width: 0; font-size: 14px; }
    .search input::placeholder { color: #333; opacity: 1; }
    .sys { width: 49px; }
    .ie { display: flex; align-items: center; width: 220px; margin: 3px 4px 3px 1px; padding: 0 8px 0 5px; gap: 5px; background: #363636; border: 1px solid #6a6a6a; }
    .ie input { flex: 1; min-width: 0; }
    .ie input::placeholder { color: #707070; opacity: 1; }
    .ie .tri { fill: #aaa; transform: rotate(180deg); }
    .app { width: 49px; }
    .active { background: #464646; border-bottom: 3px solid #aaa; padding-top: 2px; }
    .tray { display: flex; align-items: center; margin-left: auto; }
    .tray > button { width: 24px; height: 40px; font-size: 16px; }
    .tray .wide { width: 33px; }
    .tray .wide svg { width: 22px; height: 22px; }
    .clock { width: 72px; text-align: center; line-height: 19px; }
    .notify { margin: 0 13px 0 6px; }
    .edge { align-self: stretch; width: 8px; border-left: 1px solid #555; }
  `];

  render() {
    const t = (label: string, body: SVGTemplateResult, cls = "") =>
      html`<button class=${cls} aria-label=${label}><svg width="18" height="18" viewBox="0 0 18 18" fill="none" stroke="#fff">${body}</svg></button>`;
    return html`
      <button class="start" aria-label="开始"><svg width="16" height="16"><path d="M0 2l7-1v6.500H0zM8 1l8-1v7.500H8zM0 8.500h7V15l-7-1zM8 8.500h8V16l-8-1z" fill="#fff" /></svg></button>
      <label class="search"><svg width="16" height="16" fill="none" stroke="#222" stroke-width="1.500"><circle cx="10" cy="6" r="5.200" /><path d="M6.500 10L1 15.500" /></svg>
        <input aria-label="搜索" placeholder="在这里输入你要搜索的内容" /></label>
      <button class="sys" aria-label="Cortana"><svg width="16" height="16"><circle cx="8" cy="8" r="6.500" fill="none" stroke="#fff" stroke-width="2" /></svg></button>
      <button class="sys" aria-label="任务视图"><svg width="16" height="16" fill="none" stroke="#fff"><path d="M.5 0v2.500h10V0M.5 16v-2.500h10V16M.5 5.500h10v5H.5zM14.500 0v16" /><path d="M13 4.500h3v4h-3z" fill="#fff" stroke="none" /></svg></button>
      <button class="sys" aria-label="浏览助手"><svg width="22" height="22" viewBox="0 0 22 22" fill="#fff"><rect x="1" y="1" width="11" height="9" rx="4" /><rect x="12" y="2" width="9" height="11" rx="4" /><rect x="10" y="12" width="11" height="9" rx="4" /><rect x="1" y="9" width="9" height="11" rx="4" /><path d="M11 11C12 7 10 4 7 4M11 11c4 1 7-1 7-4M11 11c-1 4 1 7 4 7M11 11c-4-1-7 1-7 4" fill="none" stroke="#1c1c1c" stroke-width="1.500" /></svg></button>
      <label class="ie"><svg width="18" height="20" viewBox="0 0 18 20" fill="none"><path d="M4 11h12c0-9-12-9-12 0s10 7 12 3" stroke="#2e8fe6" stroke-width="3" /><path d="M1 18C-1 11 10 0 17 3" stroke="#4db0f5" stroke-width="1.500" /></svg>
        ${triangle}<input aria-label="网页搜索" placeholder="广州11家凉茶店被查" /><svg width="17" height="17" fill="none" stroke="#777"><circle cx="7" cy="7" r="6" /><path d="M11.500 11.500l5 5" /></svg></label>
      ${APPS.map(([n, g]) => html`<button class="app" aria-label=${n}><svg width="24" height="24" viewBox="0 0 24 24">${g}</svg></button>`)}
      <button class="app active" aria-label="AutoCAD">${autocadLogo(24)}</button>
      <div class="tray">
        ${t("帮助", svg`<circle cx="9" cy="9" r="8" fill="#1a8fd6"/><path d="M6 7c0-4 6-4 6 0 0 2-3 2-3 4M9 13v2" stroke-width="2"/>`, "wide")}
        ${t("展开", svg`<path d="M4 12l5-5 5 5" stroke-width="1.500"/>`)}
        ${t("麦克风", svg`<path d="M6 1h6v12H6z" fill="#fff"/><path d="M4 10v5h10v-5M9 15v2"/>`)}
        ${t("微信", svg`<ellipse cx="7" cy="7" rx="6" ry="5.500" fill="#4ab95a" stroke="none"/><ellipse cx="12.500" cy="11.500" rx="5" ry="4.500" fill="#ddd" stroke="none"/>`)}
        ${t("录屏", svg`<path d="M1 1h16v16H1z" fill="#fff" stroke="none"/><circle cx="5.500" cy="8" r="3" stroke="#555"/><circle cx="12.500" cy="8" r="3" fill="#d33" stroke="#555"/><path d="M5 13l4 2 4-2" stroke="#b33"/>`)}
        ${t("蓝牙", svg`<rect x="3" y="1" width="12" height="16" rx="6" fill="#1a78d2" stroke="none"/><path d="M6 6l6 6-3 3V3l3 3-6 6"/>`)}
        ${t("音量", svg`<path d="M1 7h3l4-4v12l-4-4H1zM10 6c2 2 2 4 0 6M12 4c3 3 3 7 0 10M14.500 2c4 4 4 10 0 14"/>`)}
        ${t("网络", svg`<path d="M2 15C2 8 8 3 16 3M5 15c0-5 4-9 11-9M8 15c0-3 3-6 8-6M11 15c0-2 2-3 5-3"/><circle cx="14.500" cy="14.500" r="1.500" fill="#fff"/>`)}
        ${t("安全", svg`<path d="M2 2l7 4 7-4v11l-7 4-7-4z" fill="#c2202c" stroke="none"/><path d="M6 7l3 2 3-2v4l-3 2-3-2z" fill="#1c1c1c" stroke="none"/>`)}
        ${t("电池", svg`<path d="M1.500 5.500h13v8h-13zM15 8h2v3h-2"/><path d="M4 7.500h4v4H4z" fill="#fff"/>`)}
        <button>英</button>
        <div class="clock">10:48<br />2020/7/2</div>
        <button class="notify" aria-label="通知"><svg width="18" height="18"><path d="M1 2h16v11h-5l-3 4v-4H1z" fill="#fff" /><path d="M3 5.500h12M3 8.500h12M3 11h7" stroke="#222" /></svg></button>
        <span class="edge"></span>
      </div>`;
  }
}

/* -------------------------------------------------------------- main app */

const FILE_BAR = "new open save | print preview publish print3d | cut copy paste match block | undo ~ redo ~ | pan zoomrt zoomwin zoomprev | props center palette sheets markup calc | help";
const DRAW = "line xline pline polygon rect arc circle cloud spline ellipse ellarc insert makeblk point hatch gradient region table mtext addsel".split(" ");
const MODIFY = "erase copyobj mirror offset array move rotate scale stretch trim extend breakpt brk join chamfer fillet blend explode".split(" ");
const PALETTE_ICONS = "t0 folder t2 t3 t4 t5 t6 t7 t8 t9 bird t11 t12 t13 t14 t15 字 字 t18 t19 t20 t21 t22 t23 bird yfolder".split(" ");
const PALETTE_ITEMS = ["初始设置", "-", "图形接口>", "-", "布置轴网>", "布置柱子>", "梁绘制>", "墙体绘制>", "楼板设计>", "楼梯平面", "基础承台>", "-",
  "构件绘图>", "算构件 1>", "算构件 2>", "-", "钢筋绘制>", "钢筋工具>", "尺寸标注>", "书写文字>", "文字工具>", "表格绘制>", "钢结构>", "图层显示>", "组与图块>", "实体工具>", "其他工具>", "-",
  "符 号...", "图库管理"];

@customElement("app-root")
export class AppRoot extends LitElement {
  static styles = [shared, css`
    :host { position: relative; display: flex; flex-direction: column; height: 100vh; overflow: hidden; background: #686868; color: #111;
      font: 12px/16px "Open Sans", "Noto Sans CJK SC", sans-serif; }

    .head { position: relative; padding-left: 41px; }
    .appbtn { position: absolute; left: 0; top: 0; width: 41px; height: 41px; gap: 3px; border: 1px solid #333; background: linear-gradient(#c4c4c4, #888); }
    .titlebar { display: grid; grid-template-columns: 21px 1fr auto auto; align-items: stretch; height: 24px; background: #fff; }
    .quick { background: linear-gradient(#b0b0b0, #7d7d7d); border: 1px solid #666; border-top: 0; }
    .titlebar h1 { margin: 0; padding-left: 463px; font-size: 12px; line-height: 24px; font-weight: 400; white-space: pre; }
    .info { display: flex; align-items: center; background: linear-gradient(#adadad, #7b7b7b); color: #fff; }
    .info .fly { width: 14px; }
    .info input { width: 179px; height: 20px; padding-left: 4px; background: #fafafa; color: #333; font-style: italic; }
    .info input::placeholder { color: #777; opacity: 1; }
    .info button { width: 24px; }
    .info .login { width: 96px; justify-content: space-between; padding: 0 4px 0 2px; }
    .info .small { width: 10px; }
    .info .q { width: 32px; margin-left: 8px; }
    .winbtns { display: flex; padding-left: 24px; color: #888; }
    .winbtns button { width: 46px; }
    .winbtns svg, .mdi svg { fill: none; stroke: currentColor; }

    .menubar { display: flex; height: 21px; padding-left: 2px; border-top: 1px solid #333; background: linear-gradient(#9f9f9f, #5c5c5c); color: #f6f6f6; }
    .menubar button { padding: 0 13px 0 12px; height: 19px; white-space: pre; }
    .menubar .tight { padding: 0 14px 0 0; }
    .menubar .ts { padding: 0 14px 0 13px; }
    .mdi { display: flex; margin-left: auto; padding-right: 2px; color: #222; }
    .menubar .mdi button { width: 16px; padding: 0; }

    .tabs { display: flex; align-items: flex-end; height: 27px; padding-left: 15px; background: linear-gradient(#a4a4a4, #919191); border-bottom: 1px solid #7a7a7a; }
    .doc { width: 137px; height: 22px; padding: 0 18px 0 17px; justify-content: space-between; background: linear-gradient(#e2e2e2, #c2c2c2); clip-path: polygon(0 100%, 5% 30%, 7% 6%, 9% 0, 88% 0, 91% 6%, 100% 100%); }
    .add { width: 22px; height: 17px; margin-bottom: 3px; border: 1px solid #777; border-radius: 2px 6px 2px 8px; background: #8a8a8a; }

    .bars { display: flex; flex-direction: column; gap: 5px; padding: 5px 0 6px; }
    .row { display: flex; gap: 2px; height: 22px; }
    .bar { display: flex; align-items: center; border: 1px solid #4a4a4a; border-left: 0; background: #eeeeee; }
    .grip { align-self: stretch; width: 8px; background-color: #4f4f4f; background-image: radial-gradient(#aaa 1px, transparent 1px); background-size: 3px 3px; }
    .bar button { width: 23px; height: 20px; }
    .bar .drop { width: 13px; }
    .sep { flex: none; width: 4px; height: 20px; margin-left: 2px; border-left: 1px solid #999; }
    .bar .combo { height: 20px; }
    .bar .combo select { border: 1px solid #c4c4c4; background: #e3e3e3; color: #111; }
    .style { width: 120px; }
    .in18 select { padding-left: 18px; }
    .in4 select { padding-left: 4px; }
    .layer { width: 300px; }
    .layer select { padding-left: 86px; }
    .layer .lead { gap: 2px; padding-left: 2px; }
    .swatch { width: 10px; height: 10px; border: 1px solid #111; background: #fff; }
    .color { width: 150px; font-family: "Liberation Serif", serif; font-size: 13px; }
    .color select { padding-left: 17px; }
    .color .lead { padding-left: 4px; }
    .ltype { width: 158px; font-family: "Liberation Serif", serif; font-size: 13px; }
    .ltype select { padding-left: 66px; }
    .lweight { width: 127px; font-family: "Liberation Serif", serif; font-size: 13px; }
    .lweight select { padding-left: 41px; }
    .rule { height: 1px; background: #111; }
    .ltype .rule { width: 61px; margin-left: 2px; }
    .lweight .rule { width: 36px; margin-left: 4px; }
    .plot { width: 120px; font-family: "Liberation Mono", monospace; font-size: 10px; }
    .bar .plot select { padding-left: 9px; background: #c9c9c9; color: #888; opacity: 1; }
    .plot .chev { opacity: .2; }
    .bar .glyph { color: #14147c; font-size: 14px; font-weight: 900; font-family: "Noto Sans CJK SC", sans-serif; }
    .bar .glyph.dark { color: #111; }

    .middle { display: flex; flex: 1; min-height: 0; }
    .main { display: flex; flex: 1; flex-direction: column; min-width: 0; }
    .work { display: flex; flex: 1; min-height: 0; }
    .vbar { display: flex; flex-direction: column; align-self: flex-start; width: 24px; border: 1px solid #444; background: #ececec; }
    .vgrip { height: 7px; background-color: #4f4f4f; background-image: radial-gradient(#999 1px, transparent 1px); background-size: 3px 3px; }
    .vbar button { height: 22px; }
    .vsep { height: 1px; margin: 2px; background: #bbb; }
    .side { width: 34px; padding-left: 5px; }
    .view { display: flex; flex: 1; flex-direction: column; min-width: 0; margin-left: 6px; padding-bottom: 5px; }
    .canvas { position: relative; flex: 1; min-height: 0; border: solid #a0a0a0; border-width: 1px 0 1px 1px; background: #000; color: #e8e8e8; }
    .viewlabel { padding: 5px 3px; }
    .frame { position: absolute; left: 459px; top: 90px; width: 850px; height: 601px; border: 1px solid #fff; }
    .ucs { position: absolute; left: 12px; bottom: 7px; }
    .ucs text { fill: #eee; font: 300 18px "Open Sans", sans-serif; }

    .layouts { display: flex; height: 15px; background: #f0f0f0; }
    .layouts button { height: 14px; }
    .nav { width: 14px; border: 1px solid #bbb; border-left: 0; background: #f4f4f4; }
    .nav svg { fill: #666; }
    .model { width: 46px; background: #000; color: #fff; clip-path: polygon(0 0, 100% 0, 88% 100%, 12% 100%); }
    .paper { width: 49px; background: #777; clip-path: polygon(8% 0, 100% 0, 88% 100%, 0 100%); padding: 0 1px; }
    .paper span { width: 100%; background: #fff; clip-path: polygon(8% 0, 100% 0, 88% 100%, 0 100%); line-height: 13px; }
    .mono { font-family: "Liberation Mono", "Noto Sans CJK SC", monospace; font-size: 12px; }
    .strip { display: flex; align-items: center; gap: 2px; height: 26px; padding-right: 3px; border-top: 1px solid #fff; border-bottom: 2px solid #fff; background: #f0f0f0; }
    .strip::before { content: ""; width: 5px; height: 22px; margin-left: 3px; margin-right: auto; border: solid #b5b5b5; border-width: 0 1px; }
    .strip .combo { width: 53px; height: 20px; font-size: 11px; }
    .strip .combo select { padding-left: 3px; border: 1px solid #777; background: #fff; }
    .strip .state { width: 98px; margin-right: 2px; font-size: 12px; }
    .strip .state select { border-color: #bbb; background: #e4e4e4; }
    .strip .helpbtn { width: 27px; height: 19px; border: 1px solid #bbb; background: #e6e6e6; }
    .strip .edge { align-self: stretch; margin-right: 2px; border-left: 1px solid #bbb; }

    .command { display: grid; grid-template-columns: 22px 1fr; height: 57px; border-right: 1px solid #999; }
    .cmdside { display: flex; flex-direction: column; align-items: center; gap: 6px; padding-top: 4px; background: linear-gradient(#8a8a8a, #555); }
    .cmdside .vgrip { width: 16px; background-color: transparent; }
    .cmdside .icon { stroke: #eee; }
    .history { height: 34px; padding: 1px 3px 0; background: #c8c8c8; border-bottom: 1px solid #888; }
    .history p { display: flex; align-items: center; height: 16px; margin: 0; white-space: pre; }
    .history .cjk { font: 13px/16px "Noto Sans CJK SC", sans-serif; }
    .prompt { display: flex; align-items: center; gap: 4px; height: 23px; padding-left: 5px; background: #fff; }
    .prompt input { flex: 1; margin-left: 2px; font-size: 13px; font-style: italic; }
    .prompt input::placeholder { color: #999; opacity: 1; }
    .prompt .tri { fill: #888; }

    .palette { display: flex; flex-direction: column; width: 86px; padding: 0 4px 0 5px; border-top: 1px solid #999; background: #fff; font: 12px/14px "Liberation Mono", "Noto Sans CJK SC", monospace; }
    .palhead { display: flex; align-items: center; height: 16px; padding-top: 2px; }
    .palhead i { flex: 1; height: 4px; border: solid #aaa; border-width: 1px 1px 1px 0; }
    .palhead button { width: 18px; }
    .palhead .icon { stroke: #000; }
    .paltitle { padding: 2px 0 1px; border-bottom: 1px solid #222; background: #f0f0f0; text-align: center; font-size: 10px; }
    .palbody { display: flex; flex: 1; background: #f0f0f0; }
    .palicons { display: flex; flex-direction: column; width: 20px; border-right: 1px solid #888; }
    .palicons button { height: 17px; width: 17px; }
    .palicons b { color: #a11414; font-size: 15px; }
    .pallist { flex: 1; display: flex; flex-direction: column; padding-top: 2px; padding-left: 1px; }
    .pallist button { justify-content: space-between; height: 14px; white-space: pre; }
    .pallist hr { width: 100%; height: 1px; margin: 1px 0 2px; border: 0; background: #222; }
    .pallist svg { fill: #000; }

    .status { display: flex; align-items: stretch; height: 22px; border-top: 1px solid #222; background: linear-gradient(#a2a2a2, #747474); }
    .coords { display: flex; align-items: center; gap: 12px; width: 308px; padding-left: 7px; font-family: "Liberation Mono", "Noto Sans CJK SC", monospace; font-size: 10px; white-space: pre; }
    .coords div { display: flex; align-items: center; }
    .coords span { font-size: 13px; font-family: "Noto Sans CJK SC", sans-serif; }
    .status button { width: 22px; border-right: 1px solid #777; background: linear-gradient(#cfcfcf, #a9a9a9); }
    .status .on { background: linear-gradient(#d2eef6, #8cc6da); }
    .status .gap { width: 19px; }
    .status .narrow { width: 6px; }
    .status .right { display: flex; margin-left: auto; }
    .status .text { width: 29px; }
    .status .scale { width: 53px; gap: 2px; font-family: "Liberation Mono", monospace; font-size: 11px; }
    .status .scale .tri { width: 8px; height: 5px; fill: #000; }
    .status .pressed { width: 26px; background: #999; border: 1px solid #555; }
    .status .thin { width: 13px; }
    .plugin { left: 316px; top: 247px; }
    .data { left: 1086px; top: 216px; }
    screen-recorder { left: 714px; bottom: 108px; }
  `];

  private menus = ["文件(F)", "编辑(E)", "视图(V)", "插入(I)", "格式(O)", "工具(T)", "绘图(D)", "标注(N)", "修改(M)", "参数(P)", "窗口(W)", "帮助(H)"];

  private btn = (n: string) => html`<button aria-label=${n}>${icon(n)}</button>`;

  private tools(spec: string) {
    return spec.split(" ").map((n) => n === "|" ? html`<i class="sep"></i>` : n === "~" ? html`<button class="drop" aria-label="更多">${triangle}</button>` : this.btn(n));
  }

  private header() {
    return html`<header class="head">
      <div class="titlebar">
        <button class="quick" aria-label="快速访问"><svg width="8" height="7"><path d="M0 .5h8" stroke="#111" /><path d="M0 3h8L4 7z" fill="#111" /></svg></button>
        <h1>Tssd2015 For Autodesk AutoCAD 2014    Drawing1.dwg</h1>
        <div class="info">
          <button class="fly" aria-label="展开"><svg width="4" height="8"><path d="M0 0v8l4-4z" fill="#111" /></svg></button>
          <input aria-label="键入关键字或短语" placeholder="键入关键字或短语" />
          ${this.btn("binoc")}${this.btn("person")}
          <button class="login">登录 ${triangle}</button>
          ${this.btn("exch")}${this.btn("a360")}<button class="small" aria-label="更多">${triangle}</button>
          <button class="q" aria-label="帮助">${icon("qblue")}</button><button class="small" aria-label="更多">${triangle}</button>
        </div>
        <div class="winbtns">
          <button aria-label="最小化"><svg width="12" height="12"><path d="M0 6.500h12" /></svg></button>
          <button aria-label="还原"><svg width="11" height="11"><path d="M.5 2.500h7v8h-7zM3 2V.5h7.500v8H8" /></svg></button>
          <button aria-label="关闭"><svg width="12" height="12"><path d="M1 1l10 10M11 1L1 11" /></svg></button>
        </div>
      </div>
      <nav class="menubar">
        ${this.menus.map((m) => html`<button>${m}</button>`)}
        <button class="ts">TS【图形接口</button>${["平面", "构件", "计算1", "计算2", "工具】"].map((m) => html`<button class="tight">${m}</button>`)}
        <div class="mdi">
          <button aria-label="最小化文档"><svg width="10" height="10"><path d="M0 8.500h10" stroke-width="2" /></svg></button>
          <button aria-label="还原文档"><svg width="12" height="12"><path d="M.5 4.500h7v6h-7zM4 4V1.500h7.500v6H8" /></svg></button>
          <button aria-label="关闭文档"><svg width="9" height="9"><path d="M1 1l7 7M8 1L1 8" stroke-width="2" /></svg></button>
        </div>
      </nav>
      <button class="appbtn" aria-label="应用程序菜单">
        <svg width="24" height="28" viewBox="0 0 24 28"><path d="M10 0h4l10 26-7-2-5-8-5 7-7 3z" fill="#c0271c" /><path d="M10 0h2v11L7 23l-7 3z" fill="#ee5a3e" /><path d="M7 23l5-7 5 8-5-3z" fill="#741008" /></svg>${triangle}
      </button>
    </header>`;
  }

  private toolbars() {
    return html`<div class="bars">
      <div class="row">
        <div class="bar"><i class="grip"></i>${this.tools(FILE_BAR)}</div>
        <div class="bar"><i class="grip"></i>
          ${this.btn("textstyle")}${combo("文字样式", "STANDARD", { cls: "style in18" })}<i class="sep"></i>
          ${this.btn("dimstyle")}${combo("标注样式", "STANDARD", { cls: "style in18" })}<i class="sep"></i>
          ${this.btn("tablestyle")}${combo("表格样式", "Standard", { cls: "style in4" })}<i class="sep"></i>
          ${this.btn("mleader")}${combo("多重引线样式", "Standard", { cls: "style in18" })}
        </div>
        <div class="bar"><i class="grip"></i>
          <button class="glyph">层</button><button class="glyph">编</button>${this.btn("abrush")}<button class="glyph">平</button>
          <button class="glyph dark">手</button><button class="glyph">引</button><button class="glyph">断</button><button class="glyph">齐</button>
        </div>
      </div>
      <div class="row">
        <div class="bar"><i class="grip"></i>${this.btn("layerprop")}
          ${combo("图层", "0", { cls: "layer", lead: html`${icon("bulb")}${icon("sun", 15)}${icon("freezevp", 15)}${icon("unlock", 15)}<i class="swatch"></i>` })}
          ${this.tools("layercur layerprev layerstate")}</div>
        <div class="bar"><i class="grip"></i>
          ${combo("颜色", "ByLayer", { cls: "color", lead: html`<i class="swatch"></i>` })}<i class="sep"></i>
          ${combo("线型", "ByLayer", { cls: "ltype", lead: html`<i class="rule"></i>` })}<i class="sep"></i>
          ${combo("线宽", "ByLayer", { cls: "lweight", lead: html`<i class="rule"></i>` })}<i class="sep"></i>
          ${combo("打印样式", "ByColor", { cls: "plot", disabled: true })}</div>
        <div class="bar"><i class="grip"></i>${this.tools("folder sheetpen beam | yfolder panel1 panel2 bird | qred keydoc iedoc")}</div>
      </div>
    </div>`;
  }

  private palette() {
    return html`<aside class="palette">
      <div class="palhead"><i></i><button aria-label="关闭">${icon("xclose", 10)}</button></div>
      <div class="paltitle">TSSD2015<br />[1: 100]</div>
      <div class="palbody">
        <div class="palicons">${PALETTE_ICONS.map((n) => n === "字" ? html`<button><b>字</b></button>` : this.btn(n))}</div>
        <div class="pallist">${PALETTE_ITEMS.map((t) => t === "-" ? html`<hr />`
          : html`<button>${t.replace(">", "")}${t.endsWith(">") ? html`<svg width="5" height="8"><path d="M0 0v8l5-4z" /></svg>` : nothing}</button>`)}</div>
      </div>
    </aside>`;
  }

  private view() {
    const nav = ["M2 0h1v8H2zM8 0v8L3 4z", "M8 0v8L3 4z", "M3 0v8l5-4z", "M3 0v8l5-4zM8 0h1v8H8z"];
    return html`<section class="view">
      <div class="canvas">
        <div class="viewlabel">[−][俯视][二维线框]</div>
        <div class="frame"></div>
        <svg class="ucs" width="90" height="88" viewBox="0 -8 90 88" fill="none" stroke="#eee">
          <path d="M7.500 17v50M3.500 62.500h9v9h-9zM7 66.500h49" /><text x="8" y="13" stroke="none">Y</text><text x="62" y="66" stroke="none">X</text></svg>
      </div>
      <div class="layouts">${nav.map((d) => html`<button class="nav" aria-label="布局导航"><svg width="10" height="8"><path d=${d} /></svg></button>`)}
        <button class="model">模型</button><button class="paper"><span>布局1</span></button></div>
      <div class="strip"><i class="edge"></i>
        <span>绘图1:</span>${combo("绘图比例", "100", {})}<span>出图1:</span>${combo("出图比例", "100", {})}
        <span>绘图状态</span>${combo("绘图状态", "通用", { cls: "state" })}<button class="helpbtn">帮助</button>
      </div>
    </section>`;
  }

  private status() {
    const on = [5, 6, 7, 8, 11];
    return html`<footer class="status">
      <div class="coords"><div><span>当前比例</span> 1: 100</div><div>7487.071,  19385.923, 0.000</div></div>
      ${Array.from({ length: 15 }, (_, i) => html`<button class=${on.includes(i) ? "on" : ""} aria-label="状态 ${i + 1}">${icon(`s${i}`)}</button>`)}
      <div class="right">
        <button class="text">模型</button>${this.btn("sm1")}${this.btn("sm2")}<i class="gap"></i>
        <button class="scale">${icon("anno", 14)}1:1${triangle}</button>${this.btn("annob")}${this.btn("annox")}<i class="narrow"></i>
        ${this.btn("gear")}${this.btn("slock")}${this.btn("orange")}
        <button class="pressed" aria-label="隔离对象">${icon("bulb")}</button><i class="narrow"></i>
        <button class="thin" aria-label="更多">${triangle}</button>${this.btn("screen")}
      </div>
    </footer>`;
  }

  render() {
    return html`
      ${this.header()}
      <div class="tabs"><button class="doc">Drawing1* <svg width="8" height="8"><path d="M1 1l6 6M7 1L1 7" stroke="#888" stroke-width="2" /></svg></button>
        <button class="add" aria-label="新建"><svg width="8" height="8"><path d="M4 0v8M0 4h8" stroke="#bbb" stroke-width="2" /></svg></button></div>
      ${this.toolbars()}
      <div class="middle">
        <div class="main">
          <div class="work">
            <div class="vbar"><i class="vgrip"></i>${DRAW.map(this.btn)}</div>
            ${this.view()}
            <div class="side">
              <div class="vbar"><i class="vgrip"></i>${MODIFY.map(this.btn)}</div>
              <div class="vbar"><i class="vgrip"></i>${["order1", "order2", "order3", "order4"].map(this.btn)}<i class="vsep"></i>${["orderabc", "orderhatch"].map(this.btn)}</div>
            </div>
          </div>
          <div class="command">
            <div class="cmdside"><i class="vgrip"></i>${icon("xclose", 11)}${icon("wrench")}</div>
            <div>
              <div class="history mono"><p><span class="cjk">命令</span>:</p><p><span class="cjk">请指定图框左上角点</span>: (7487.07149968809,19385.9234587651)</p></div>
              <div class="prompt">${icon("prompt")}${triangle}<input aria-label="命令" placeholder="键入命令" /></div>
            </div>
          </div>
        </div>
        ${this.palette()}
      </div>
      ${this.status()}
      <desktop-taskbar></desktop-taskbar>
      <stair-plugin-dialog class="plugin"></stair-plugin-dialog>
      <stair-info-dialog class="data"></stair-info-dialog>
      <screen-recorder></screen-recorder>`;
  }
}
